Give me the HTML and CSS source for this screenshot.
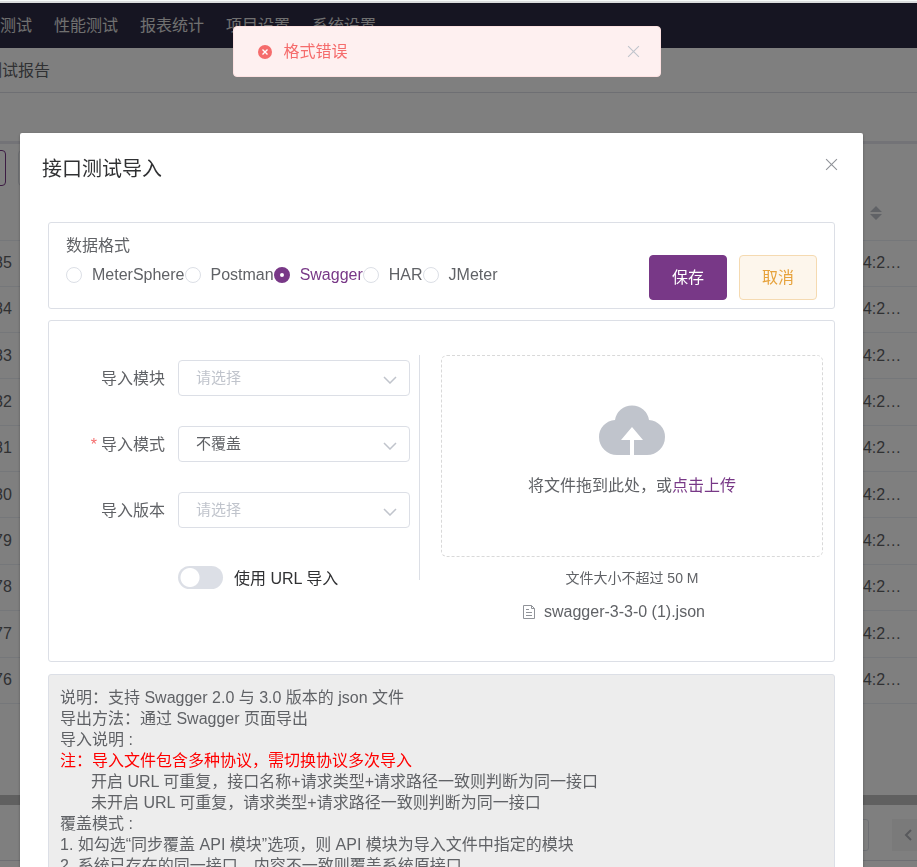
FILE: index.html
```html
<!DOCTYPE html>
<html lang="zh-CN">
<head>
    <meta charset="UTF-8">
    <meta name="viewport" content="width=device-width, initial-scale=1.0">
    <title>接口测试导入</title>
    <link rel="stylesheet" href="styles.css">
</head>
<body>
    <div class="page">
        <header class="topbar">
            <nav class="main-nav">
                <a href="#">测试</a>
                <a href="#">性能测试</a>
                <a href="#">报表统计</a>
                <a href="#">项目设置</a>
                <a href="#">系统设置</a>
            </nav>
        </header>
        <nav class="sub-nav">
            <a href="#">测试报告</a>
        </nav>
        <div class="spacer"></div>
        <main class="list">
            <div class="toolbar">
                <button class="tool active" type="button" aria-label="列表"></button>
                <button class="tool" type="button" aria-label="视图"></button>
            </div>
            <div class="list-head">
                <svg class="sort" viewBox="0 0 12 14"><path d="M6 0l6 6H0zM6 14L0 8h12z" fill="#c0c4cc"/></svg>
            </div>
            <table class="rows">
                <tr><td>85</td><td class="time">14:2…</td></tr>
                <tr><td>84</td><td class="time">14:2…</td></tr>
                <tr><td>83</td><td class="time">14:2…</td></tr>
                <tr><td>82</td><td class="time">14:2…</td></tr>
                <tr><td>81</td><td class="time">14:2…</td></tr>
                <tr><td>80</td><td class="time">14:2…</td></tr>
                <tr><td>79</td><td class="time">14:2…</td></tr>
                <tr><td>78</td><td class="time">14:2…</td></tr>
                <tr><td>77</td><td class="time">14:2…</td></tr>
                <tr><td>76</td><td class="time">14:2…</td></tr>
            </table>
            <div class="scrollbar"></div>
            <div class="pager">
                <div class="page-size"></div>
                <button class="prev" type="button" aria-label="上一页">
                    <svg viewBox="0 0 10 12"><path d="M7 1L2 6l5 5" fill="none" stroke="#b0b2b8" stroke-width="2"/></svg>
                </button>
            </div>
        </main>
    </div>

    <div class="mask">
        <section class="dialog" role="dialog" aria-labelledby="dialog-title">
            <div class="dialog-head">
                <h1 id="dialog-title">接口测试导入</h1>
                <button class="close" type="button" aria-label="关闭">
                    <svg viewBox="0 0 12 12"><path d="M1 1l10 10M11 1L1 11" fill="none" stroke="#909399"/></svg>
                </button>
            </div>
            <form class="dialog-body">
                <div class="card format">
                    <fieldset class="format-list">
                        <legend>数据格式</legend>
                        <div class="radios">
                            <label><input type="radio" name="format">MeterSphere</label>
                            <label><input type="radio" name="format">Postman</label>
                            <label><input type="radio" name="format" checked>Swagger</label>
                            <label><input type="radio" name="format">HAR</label>
                            <label><input type="radio" name="format">JMeter</label>
                        </div>
                    </fieldset>
                    <div class="actions">
                        <button class="btn save" type="button">保存</button>
                        <button class="btn cancel" type="button">取消</button>
                    </div>
                </div>

                <div class="card import">
                    <div class="fields">
                        <div class="field">
                            <label for="module">导入模块</label>
                            <div class="select">
                                <select id="module" class="empty"><option>请选择</option></select>
                                <svg viewBox="0 0 14 8"><path d="M1 1l6 6 6-6"/></svg>
                            </div>
                        </div>
                        <div class="field required">
                            <label for="mode">导入模式</label>
                            <div class="select">
                                <select id="mode"><option>不覆盖</option></select>
                                <svg viewBox="0 0 14 8"><path d="M1 1l6 6 6-6"/></svg>
                            </div>
                        </div>
                        <div class="field">
                            <label for="version">导入版本</label>
                            <div class="select">
                                <select id="version" class="empty"><option>请选择</option></select>
                                <svg viewBox="0 0 14 8"><path d="M1 1l6 6 6-6"/></svg>
                            </div>
                        </div>
                        <label class="switch"><input type="checkbox">使用 URL 导入</label>
                    </div>
                    <div class="upload">
                        <div class="drop">
                            <svg class="cloud" viewBox="0 0 66 50">
                                <path d="M16 15a17.2 17.2 0 0 1 34 0a17 17 0 0 1 16 17a18 18 0 0 1-18 18H35V35h9L33 22 22 35h9v15H18A18 18 0 0 1 0 32a17 17 0 0 1 16-17z" fill="#c0c4cc"/>
                            </svg>
                            <p>将文件拖到此处，或<a href="#">点击上传</a></p>
                        </div>
                        <p class="tip">文件大小不超过 50 M</p>
                        <p class="file">
                            <svg viewBox="0 0 14 16"><path d="M1.500 1.500h8l3 3v10h-11zM9.500 1.500v3h3M4 5.500h3M4 8.500h6M4 11.500h6" fill="none" stroke="#909399"/></svg>
                            swagger-3-3-0 (1).json
                        </p>
                    </div>
                </div>

                <div class="card notes">
                    <p>说明：支持 Swagger 2.0 与 3.0 版本的 json 文件</p>
                    <p>导出方法：通过 Swagger 页面导出</p>
                    <p>导入说明 :</p>
                    <p class="warn">注：导入文件包含多种协议，需切换协议多次导入</p>
                    <p class="indent">开启 URL 可重复，接口名称+请求类型+请求路径一致则判断为同一接口</p>
                    <p class="indent">未开启 URL 可重复，请求类型+请求路径一致则判断为同一接口</p>
                    <p>覆盖模式 :</p>
                    <p>1. 如勾选“同步覆盖 API 模块”选项，则 API 模块为导入文件中指定的模块</p>
                    <p>2. 系统已存在的同一接口，内容不一致则覆盖系统原接口</p>
                </div>
            </form>
        </section>
    </div>

    <div class="message" role="alert">
        <svg class="error" viewBox="0 0 14 14"><circle cx="7" cy="7" r="7" fill="#f56c6c"/><path d="M4.500 4.500l5 5M9.500 4.500l-5 5" stroke="#fff" stroke-width="1.400"/></svg>
        <span>格式错误</span>
        <button class="close" type="button" aria-label="关闭">
            <svg viewBox="0 0 12 12"><path d="M1 1l10 10M11 1L1 11" fill="none" stroke="#c0c4cc"/></svg>
        </button>
    </div>
</body>
</html>
```
FILE: styles.css
```css
* {
    box-sizing: border-box;
}
body {
    margin: 0;
    height: 100vh;
    overflow: hidden;
    font-family: "Liberation Sans", "Noto Sans CJK SC", sans-serif;
    font-size: 16px;
    color: #606266;
    background-color: #fff;
}
h1, p, fieldset, legend {
    margin: 0;
    padding: 0;
    border: none;
    font-weight: normal;
}
button, select {
    font-family: inherit;
}
a {
    text-decoration: none;
}
svg {
    display: block;
}

/* list page behind the dialog */
.page {
    height: 100vh;
    overflow: hidden;
    border-top: 1px solid #f5f9f8;
}
.topbar {
    box-sizing: content-box;
    height: 45px;
    background-color: #2c2a44;
    border-top: 2px solid #dadcdd;
}
.main-nav {
    display: flex;
    gap: 22px;
    line-height: 45px;
    white-space: nowrap;
}
.main-nav a {
    color: #e0e0e0;
}
.sub-nav {
    height: 45px;
    line-height: 45px;
    border-bottom: 1px solid #dcdfe6;
    margin-left: -14px;
}
.sub-nav a {
    color: #606266;
}
.spacer {
    height: 48px;
}
.list {
    border-top: 3px solid #e6e6ee;
}
.toolbar {
    display: flex;
    gap: 12px;
    height: 42px;
    padding-top: 6px;
    margin-left: -30px;
}
.tool {
    width: 36px;
    height: 36px;
    background-color: #fff;
    border: 1px solid #dcdfe6;
    border-radius: 4px;
}
.tool.active {
    border-color: #783887;
}
.list-head {
    display: flex;
    justify-content: flex-end;
    height: 55px;
    padding: 20px 35px 0 0;
    border-bottom: 1px solid #ebeef5;
}
.sort {
    width: 12px;
    height: 14px;
}
.rows {
    width: 100%;
    height: 463px;
    border-collapse: collapse;
}
.rows td {
    padding: 0;
    border-bottom: 1px solid #ebeef5;
}
.rows td:first-child {
    text-indent: -6px;
}
.rows .time {
    width: 63px;
}
.scrollbar {
    height: 10px;
    margin-top: 91px;
    background-color: #c1c1c1;
}
.pager {
    display: flex;
    justify-content: flex-end;
    gap: 23px;
    padding: 14px 0 9px;
    border-bottom: 1px solid #dcdfe6;
}
.page-size {
    width: 110px;
    height: 32px;
    border: 1px solid #dcdfe6;
    border-radius: 3px;
}
.prev {
    width: 25px;
    height: 32px;
    padding: 0 0 0 12px;
    border: none;
    background-color: #f4f4f5;
}
.prev svg {
    width: 10px;
    height: 12px;
}

.mask {
    position: fixed;
    top: 3px;
    right: 0;
    bottom: 0;
    left: 0;
    padding: 130px 54px 0 20px;
    background-color: rgba(0, 0, 0, 0.5);
}
.dialog {
    background-color: #fff;
    border-radius: 2px;
    box-shadow: 0 1px 3px rgba(0, 0, 0, 0.3);
}
.close {
    padding: 0;
    border: none;
    background: none;
    cursor: pointer;
}
.close svg {
    width: 13px;
    height: 13px;
}
.dialog-head {
    display: flex;
    justify-content: space-between;
    align-items: center;
    height: 62px;
    padding: 6px 25px 0 22px;
}
.dialog-head h1 {
    font-size: 20px;
    color: #303133;
}
.dialog-head .close {
    padding-bottom: 6px;
}
.dialog-body {
    padding: 27px 28px 40px;
}
.card {
    border: 1px solid #dcdfe6;
    border-radius: 3px;
    margin-bottom: 12px;
}

.format {
    display: flex;
    justify-content: space-between;
    height: 87px;
    margin-bottom: 11px;
    padding: 10px 17px 8px;
}
.format legend {
    line-height: 26px;
}
.radios {
    display: flex;
    margin-top: 6px;
    line-height: 20px;
}
.radios label {
    display: flex;
    align-items: center;
}
.radios input {
    appearance: none;
    width: 16px;
    height: 16px;
    margin: 0 10px 0 0;
    border: 1px solid #dcdfe6;
    border-radius: 50%;
    background-color: #fff;
}
.radios input:checked {
    border: 6px solid #783887;
}
.radios label:has(:checked) {
    color: #783887;
}
.actions {
    display: flex;
    align-items: flex-end;
    gap: 12px;
}
.btn {
    width: 78px;
    height: 45px;
    padding: 0 0 3px;
    font-size: 16px;
    border: 1px solid #783887;
    border-radius: 4px;
    cursor: pointer;
}
.save {
    color: #fff;
    background-color: #783887;
}
.cancel {
    color: #e6a23c;
    background-color: #fdf6ec;
    border-color: #f5dab1;
}

.import {
    display: flex;
    padding: 34px 11px 35px 29px;
}
.fields {
    flex: 0 0 342px;
    height: 225px;
    padding: 5px 9px 0 0;
    border-right: 1px solid #dcdfe6;
}
.field {
    display: flex;
    align-items: center;
    margin-bottom: 30px;
}
.field > label {
    width: 100px;
    padding: 0 13px 2px 0;
    text-align: right;
    white-space: nowrap;
}
.required > label::before {
    content: "*";
    margin-right: 4px;
    color: #f56c6c;
}
.select {
    position: relative;
    flex: 1;
}
.select select {
    appearance: none;
    display: block;
    width: 100%;
    height: 36px;
    padding: 0 17px 2px;
    font-size: 15px;
    color: #606266;
    background-color: #fff;
    border: 1px solid #dcdfe6;
    border-radius: 4px;
}
.select .empty {
    color: #c0c4cc;
}
.select svg {
    position: absolute;
    top: 16px;
    right: 13px;
    width: 14px;
    height: 8px;
    fill: none;
    stroke: #c0c4cc;
    stroke-width: 1.5;
    pointer-events: none;
}
.switch {
    display: flex;
    align-items: center;
    margin: 37px 0 0 100px;
    color: #303133;
}
.switch input {
    appearance: none;
    width: 45px;
    height: 23px;
    margin: 0 11px 0 0;
    border-radius: 12px;
    background: radial-gradient(circle at 12px 50%, #fff 9px, #dcdfe6 10px);
}
.upload {
    flex: 1;
    padding-left: 21px;
    text-align: center;
}
.drop {
    height: 202px;
    padding-top: 49px;
    border: 1px dashed #d9d9d9;
    border-radius: 6px;
}
.cloud {
    width: 66px;
    height: 50px;
    margin: 0 auto 18px;
}
.drop p {
    line-height: 26px;
}
.drop a {
    color: #783887;
}
.tip {
    margin-top: 9px;
    font-size: 14px;
    line-height: 24px;
}
.file {
    display: flex;
    align-items: center;
    margin-top: 8px;
    padding-left: 81px;
    line-height: 28px;
}
.file svg {
    width: 14px;
    height: 16px;
    margin-right: 8px;
}

.notes {
    padding: 12px 11px;
    line-height: 21px;
    background-color: #ededed;
}
.warn {
    color: #f00;
}
.indent {
    padding-left: 31px;
}

.message {
    position: fixed;
    top: 26px;
    left: 50%;
    display: flex;
    align-items: center;
    width: 428px;
    height: 51px;
    margin-left: -226px;
    padding: 0 20px 0 24px;
    color: #f56c6c;
    background-color: #fef0f0;
    border: 1px solid #fde2e2;
    border-radius: 4px;
}
.message span {
    flex: 1;
    padding-bottom: 3px;
}
.error {
    width: 14px;
    height: 14px;
    margin-right: 12px;
}
```
